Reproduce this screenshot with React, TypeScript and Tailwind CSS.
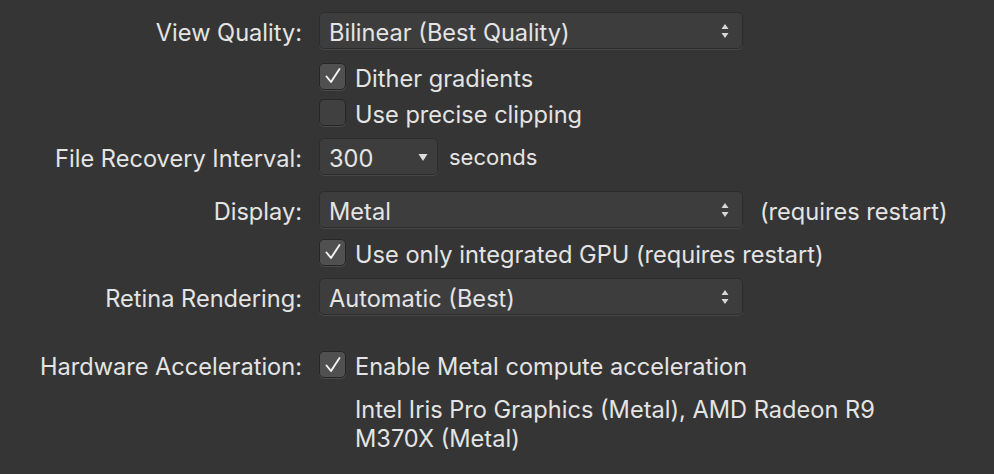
import React from "react";

const font = { fontFamily: "Inter, 'Noto Sans', sans-serif" };

function Updown() {
  return (
    <svg width="10" height="18" viewBox="0 0 10 18" className="shrink-0">
      <path d="M5 2 L8.5 7 L1.5 7 Z" fill="#d8d8d8" />
      <path d="M5 16 L8.5 11 L1.5 11 Z" fill="#d8d8d8" />
    </svg>
  );
}

function Down() {
  return (
    <svg width="12" height="10" viewBox="0 0 12 10" className="shrink-0">
      <path d="M1.5 2 L10.5 2 L6 9 Z" fill="#dcdcdc" />
    </svg>
  );
}

function Popup({ text, w, single }: { text: string; w: string; single?: boolean }) {
  return (
    <div
      className={`${w} h-[37px] rounded-[5px] bg-[#3d3d3d] border border-[#2c2c2c] shadow-[0_1px_0_#474747] flex items-center justify-between pl-[9px] ${single ? "pr-[8px]" : "pr-[12px]"}`}
    >
      <span className="pt-[4px]">{text}</span>
      {single ? <Down /> : <Updown />}
    </div>
  );
}

function Check({ on }: { on: boolean }) {
  return (
    <div
      className={`w-[27px] h-[27px] rounded-[5px] border border-[#262626] shadow-[0_1px_0_#4a4a4a] flex items-center justify-center shrink-0 ${on ? "bg-[#505050]" : "bg-[#404040]"}`}
    >
      {on && (
        <svg width="22" height="22" viewBox="0 0 22 22">
          <path d="M4.5 11.5 L9 17 L17.5 4" stroke="#f4f4f4" strokeWidth="1.9" fill="none" strokeLinecap="round" strokeLinejoin="round" />
        </svg>
      )}
    </div>
  );
}

function Row({ label, children, cls }: { label?: string; children: React.ReactNode; cls: string }) {
  return (
    <div className={`flex items-center ${cls}`}>
      <div className="w-[302px] text-right shrink-0 pt-[4px]">{label ?? ""}</div>
      <div className="ml-[17px] flex items-center">{children}</div>
    </div>
  );
}

function CheckRow({ on, text }: { on: boolean; text: string }) {
  return (
    <div className="flex items-center h-[28px]">
      <Check on={on} />
      <span className="ml-[9px] pt-[4px]">{text}</span>
    </div>
  );
}

export default function App() {
  return (
    <div
      className="w-[994px] h-[474px] bg-[#353535] text-[#e4e4e4] text-[23.6px] leading-[29px] overflow-hidden pt-[12px]"
      style={font}
    >
      <Row label="View Quality:" cls="">
        <Popup text="Bilinear (Best Quality)" w="w-[424px]" />
      </Row>
      <Row cls="mt-[13px]">
        <CheckRow on text="Dither gradients" />
      </Row>
      <Row cls="mt-[8px]">
        <CheckRow on={false} text="Use precise clipping" />
      </Row>
      <Row label="File Recovery Interval:" cls="mt-[12px]">
        <Popup text="300" w="w-[119px]" single />
        <span className="ml-[11px] text-[22px] pt-[2px]">seconds</span>
      </Row>
      <Row label="Display:" cls="mt-[16px]">
        <Popup text="Metal" w="w-[424px]" />
        <span className="ml-[17px] pt-[4px]">(requires restart)</span>
      </Row>
      <Row cls="mt-[10px]">
        <CheckRow on text="Use only integrated GPU (requires restart)" />
      </Row>
      <Row label="Retina Rendering:" cls="mt-[12px]">
        <Popup text="Automatic (Best)" w="w-[424px]" />
      </Row>
      <Row label="Hardware Acceleration:" cls="mt-[33px]">
        <CheckRow on text="Enable Metal compute acceleration" />
      </Row>
      <div className="ml-[355px] mt-[14px] leading-[29px]">
        <div>Intel Iris Pro Graphics (Metal), AMD Radeon R9</div>
        <div>M370X (Metal)</div>
      </div>
    </div>
  );
}
